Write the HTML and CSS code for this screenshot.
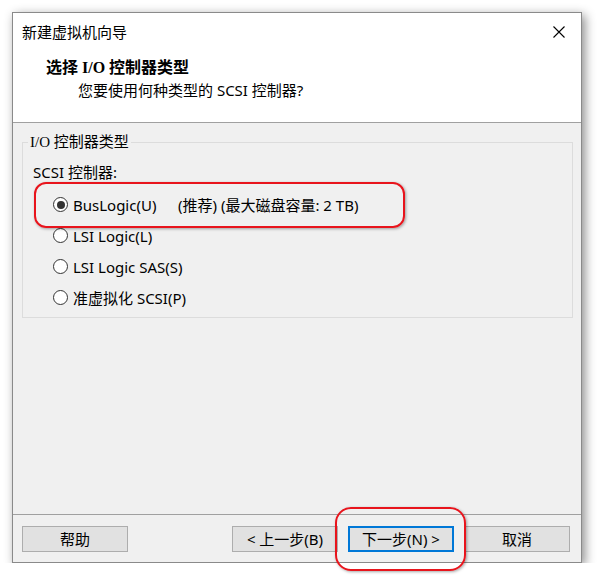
FILE: index.html
```html
<!DOCTYPE html>
<html lang="zh-CN">
<head>
  <meta charset="UTF-8" />
  <title>新建虚拟机向导</title>
  <link rel="stylesheet" href="styles.css">
</head>
<body>
  <div class="dialog">
    <div class="titlebar">
      <span class="title">新建虚拟机向导</span>
      <svg class="close" width="12" height="12" viewBox="0 0 12 12">
        <path d="M0.5 0.5 L11.5 11.5 M11.5 0.5 L0.5 11.5" stroke="#000" stroke-width="1.1" fill="none"/>
      </svg>
    </div>

    <div class="header">
      <div class="h-title">选择 I/O 控制器类型</div>
      <div class="h-sub">您要使用何种类型的 SCSI 控制器?</div>
    </div>

    <div class="content">
      <fieldset class="group">
        <legend>I/O 控制器类型</legend>
        <div class="group-label">SCSI 控制器:</div>
        <div class="opt"><span class="radio checked"></span><span class="opt-text">BusLogic(U)</span><span class="note">(推荐) (最大磁盘容量: 2 TB)</span></div>
        <div class="opt"><span class="radio"></span><span class="opt-text">LSI Logic(L)</span></div>
        <div class="opt"><span class="radio"></span><span class="opt-text">LSI Logic SAS(S)</span></div>
        <div class="opt"><span class="radio"></span><span class="opt-text">准虚拟化 SCSI(P)</span></div>
      </fieldset>
    </div>

    <div class="footer">
      <div class="btn">帮助</div>
      <div class="spacer"></div>
      <div class="btn">&lt; 上一步(B)</div>
      <div class="btn btn-default">下一步(N) &gt;</div>
      <div class="btn">取消</div>
    </div>
  </div>

  <!-- red annotation marks -->
  <div class="mark mark-radio"></div>
  <div class="mark mark-next"></div>
</body>
</html>
```

FILE: styles.css
```css
* { box-sizing: border-box; }
body {
  margin: 0;
  background: #fff;
  font-family: "Noto Sans", "Noto Sans CJK SC", sans-serif;
  font-size: 15px;
  color: #000;
}
.dialog {
  margin: 12px 0 0 12px;
  width: 570px;
  height: 551px;
  border: 1px solid #8a8a8a;
  background: #f0f0f0;
  box-shadow: 3px 3px 10px rgba(0, 0, 0, 0.45);
  display: flex;
  flex-direction: column;
}
.titlebar {
  height: 38px;
  background: #fff;
  display: flex;
  align-items: center;
  padding: 0 16px 0 9px;
}
.title {
  flex: 1;
  line-height: 18px;
}
.header {
  height: 72px;
  background: #fff;
  border-bottom: 1px solid #a0a0a0;
  padding: 8px 0 0 33px;
}
.h-title {
  font-family: "Liberation Serif", "Noto Sans CJK SC", serif;
  font-weight: bold;
  font-size: 16px;
  line-height: 18px;
}
.h-sub {
  margin: 4px 0 0 32px;
  line-height: 18px;
}
.content {
  flex: 1;
  padding: 10px 8px 0 9px;
}
.group {
  margin: 0;
  padding: 0 4px 4px 5px;
  border: 1px solid #dcdcdc;
  min-width: 0;
}
.group legend {
  font-family: "Liberation Serif", "Noto Sans CJK SC", serif;
  font-size: 15px;
  line-height: 18px;
  padding: 0 2px;
}
.group-label {
  margin: 12px 0 0 5px;
  line-height: 18px;
}
.opt {
  height: 31px;
  display: flex;
  align-items: center;
  padding-left: 25px;
}
.group-label + .opt { margin-top: 8px; }
.radio {
  width: 15px;
  height: 15px;
  border: 1px solid #333;
  border-radius: 50%;
  background: #fff;
  margin-right: 5px;
  display: flex;
  align-items: center;
  justify-content: center;
}
.radio.checked::after {
  content: "";
  width: 8px;
  height: 8px;
  border-radius: 50%;
  background: #333;
}
.opt-text { line-height: 18px; }
.opt .opt-text:not(:last-child) { width: 105px; }
.note { line-height: 18px; }
.footer {
  height: 48px;
  border-top: 1px solid #a0a0a0;
  display: flex;
  align-items: flex-start;
  padding: 11px 11px 0 9px;
}
.spacer { flex: 1; }
.btn {
  width: 106px;
  height: 26px;
  border: 1px solid #adadad;
  background: #e1e1e1;
  display: flex;
  align-items: center;
  justify-content: center;
  line-height: 18px;
}
.btn + .btn { margin-left: 10px; }
.btn-default { border: 2px solid #0078d7; }
.mark {
  position: absolute;
  border: 2px solid #e8141c;
  box-shadow: 1px 1px 3px rgba(0, 0, 0, 0.35);
}
.mark-radio {
  left: 34px;
  top: 182px;
  width: 371px;
  height: 46px;
  border-radius: 12px;
}
.mark-next {
  left: 335px;
  top: 507px;
  width: 131px;
  height: 64px;
  border-radius: 16px;
}
```
